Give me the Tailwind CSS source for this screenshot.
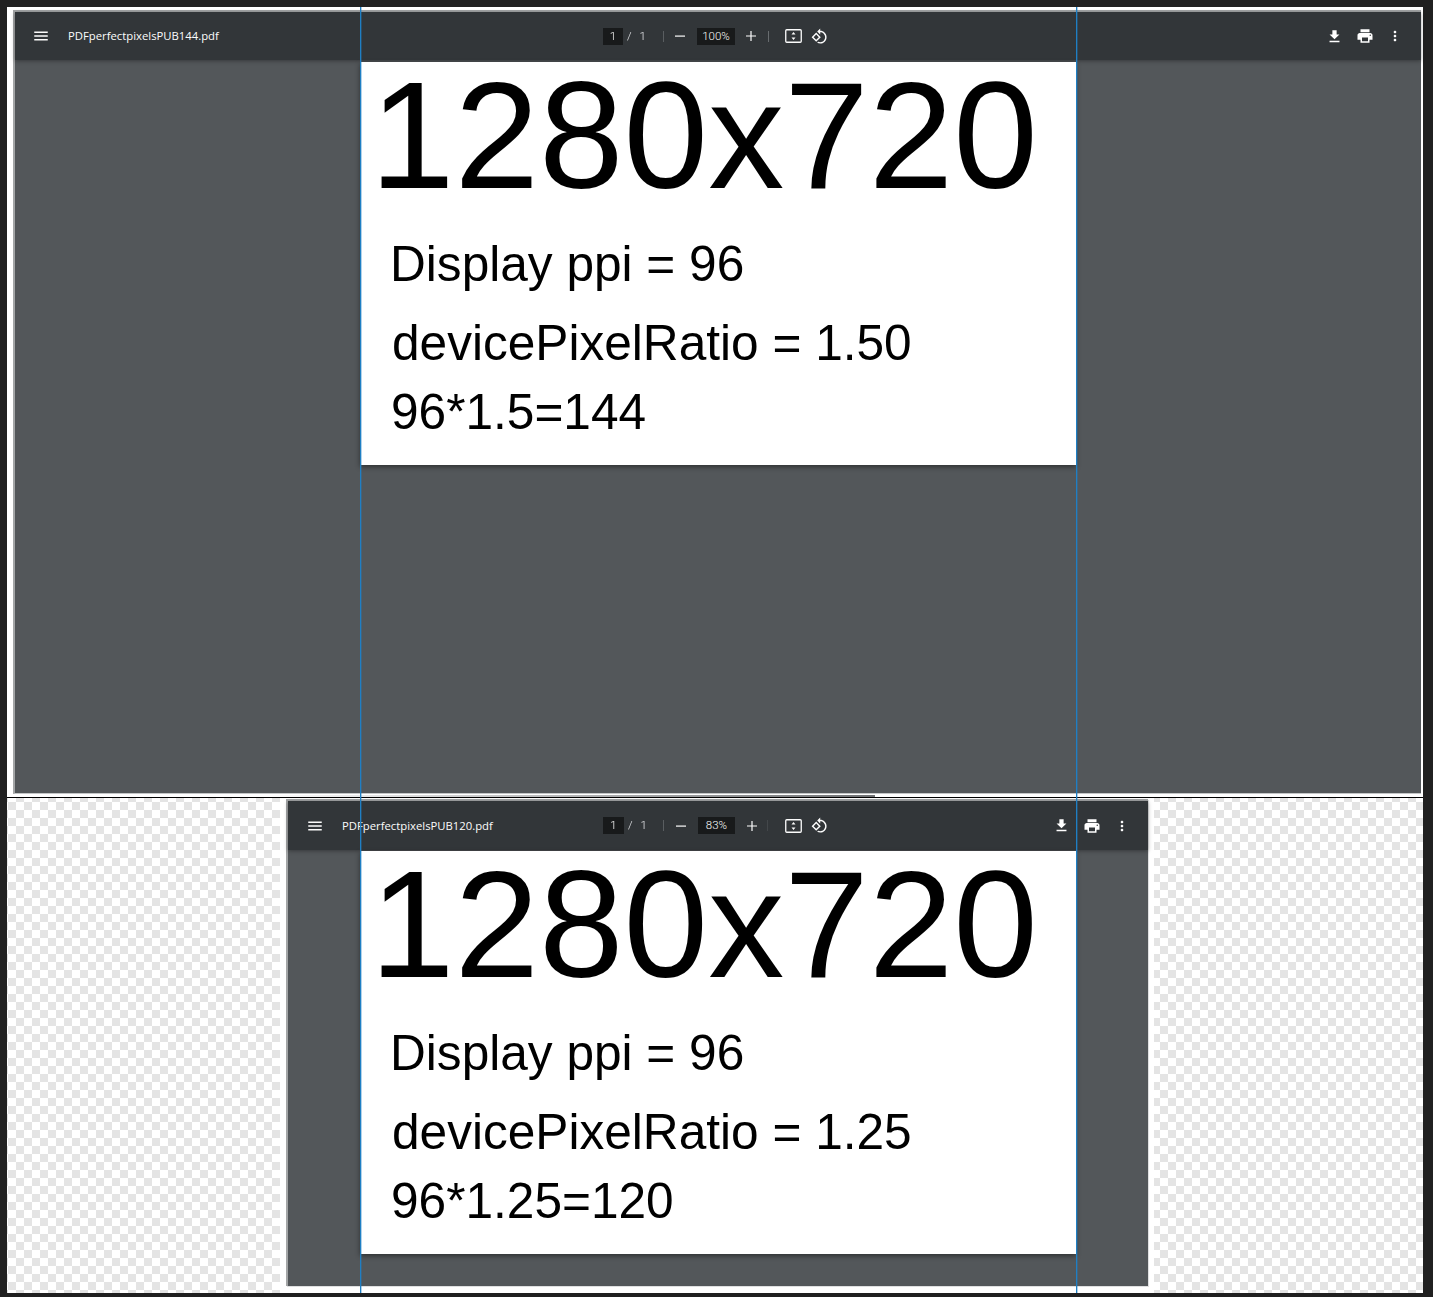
<!DOCTYPE html>
<html>
<head>
	<title>PDF perfect pixels</title>
	<script src="https://cdn.jsdelivr.net/npm/@tailwindcss/browser@4"></script>
</head>
<body class="relative h-[1297px] w-[1433px] overflow-hidden bg-[#202020] font-['Liberation_Sans',Arial,sans-serif]">
	<div class="mx-[7px] mt-[7px] h-[1286px] w-[1416px] bg-white">

		<!-- top window, scale 144 -->
		<section class="h-[790px] pt-[3px]">
			<div class="ml-[6px] mr-[2px] flex h-[784px] flex-col border-b border-l-2 border-t-2 border-b-[#c4c6c7] border-l-[#a3a5a6] border-t-[#a3a5a6] bg-[#53575a]">
				<header class="flex h-[48px] shrink-0 items-center bg-[#323639] pr-[18px] text-white shadow-[0_1px_4px_rgba(0,0,0,0.35)]">
					<div class="flex w-[588px] shrink-0 items-center pl-[17px] opacity-[0.99]">
						<svg class="h-[18px] w-[18px] fill-white" viewBox="0 0 24 24"><path d="M3 18h18v-2H3v2zm0-5h18v-2H3v2zm0-7v2h18V6H3z"/></svg>
						<span class="ml-[18px] pt-px font-['Open_Sans',sans-serif] text-[11.3px]">PDFperfectpixelsPUB144.pdf</span>
					</div>
					<div class="flex items-center font-['Roboto',sans-serif] text-[11.5px] font-light opacity-[0.99]">
						<span class="flex h-[17px] w-[20px] items-center justify-center bg-[#191b1c] pt-px">1</span>
						<span class="ml-[4px] pt-px text-[#e8eaed]">/</span>
						<span class="ml-[8px] pt-px text-[#e8eaed]">1</span>
						<span class="ml-[17px] h-[11px] w-px bg-[#5c6063]"></span>
						<svg class="ml-[10px] h-[12px] w-[12px] fill-white" viewBox="0 0 12 12"><rect x="1" y="5.5" width="10" height="1.2"/></svg>
						<span class="ml-[11px] flex h-[17px] w-[38px] items-center justify-center bg-[#191b1c] pt-px">100%</span>
						<svg class="ml-[10px] h-[12px] w-[12px] fill-white" viewBox="0 0 12 12"><path d="M1 5.4h4.4V1h1.2v4.4H11v1.2H6.6V11H5.4V6.6H1z"/></svg>
						<span class="ml-[11px] h-[11px] w-px bg-[#6a6e71]"></span>
						<svg class="ml-[16px] h-[14px] w-[17px]" viewBox="0 0 17 14"><rect x="0.75" y="0.75" width="15.5" height="12.5" rx="1" fill="none" stroke="#fff" stroke-width="1.3"/><path d="M8.5 3l2 2.5h-4zM8.5 11l-2-2.5h4z" fill="#fff"/></svg>
						<svg class="ml-[9px] h-[17px] w-[17px] fill-white" viewBox="0 0 24 24"><path d="M7.34 6.41L.86 12.9l6.49 6.48 6.49-6.48-6.5-6.49zM3.69 12.9l3.66-3.66L11 12.9l-3.66 3.66-3.65-3.66zm15.67-6.26C17.61 4.88 15.3 4 13 4V.76L8.76 5 13 9.24V6c1.79 0 3.58.68 4.95 2.05 2.73 2.73 2.73 7.17 0 9.9C16.58 19.32 14.79 20 13 20c-.97 0-1.94-.21-2.84-.61l-1.49 1.49C10.02 21.62 11.51 22 13 22c2.3 0 4.61-.88 6.36-2.64 3.52-3.51 3.52-9.21 0-12.72z"/></svg>
					</div>
					<div class="ml-auto flex items-center gap-[13px]">
						<svg class="h-[17px] w-[17px] fill-white" viewBox="0 0 24 24"><path d="M19 9h-4V3H9v6H5l7 7 7-7zM5 18v2h14v-2H5z"/></svg>
						<svg class="h-[18px] w-[18px] fill-white" viewBox="0 0 24 24"><path d="M19 8H5c-1.66 0-3 1.34-3 3v6h4v4h12v-4h4v-6c0-1.66-1.34-3-3-3zm-3 11H8v-5h8v5zm3-7c-.55 0-1-.45-1-1s.45-1 1-1 1 .45 1 1-.45 1-1 1zm-1-9H6v4h12V3z"/></svg>
						<svg class="h-[16px] w-[16px] fill-white" viewBox="0 0 24 24"><path d="M12 8c1.1 0 2-.9 2-2s-.9-2-2-2-2 .9-2 2 .9 2 2 2zm0 2c-1.1 0-2 .9-2 2s.9 2 2 2 2-.9 2-2-.9-2-2-2zm0 6c-1.1 0-2 .9-2 2s.9 2 2 2 2-.9 2-2-.9-2-2-2z"/></svg>
					</div>
				</header>
				<div class="pl-[345px] pt-[2px]">
					<article class="h-[403px] w-[716px] bg-white text-black shadow-[0_2px_5px_rgba(0,0,0,0.45)]">
						<p class="pl-[10px] pt-[3px] text-[152px] leading-[140px]">1280x720</p>
						<p class="pl-[30px] pt-[31px] text-[49.6px] leading-[56px]">Display ppi = 96</p>
						<p class="pl-[32px] pt-[23px] text-[49.6px] leading-[56px]">devicePixelRatio = 1.50</p>
						<p class="pl-[31px] pt-[13px] text-[49.6px] leading-[56px]">96*1.5=144</p>
					</article>
				</div>
			</div>
			<div class="mt-px h-[2px] w-[868px] bg-linear-to-r from-white from-30% to-[#6f7173]"></div>
		</section>

		<div class="h-px bg-black"></div>

		<!-- bottom window, scale 120, on a transparency grid -->
		<section class="flex h-[495px] items-start bg-[repeating-conic-gradient(#e4e4e4_0_25%,#ffffff_0_50%)] bg-[length:16px_16px] bg-[position:-7px_4px]">
			<div class="ml-[273px] h-[495px] w-[874px] bg-white pl-[6px] pt-px">
				<div class="flex h-[487px] w-[862px] flex-col border-l-2 border-t-2 border-[#a3a5a6] bg-[#53575a] shadow-[1px_1px_0_#dfe0e1]">
					<header class="flex h-[49px] shrink-0 items-center bg-[#323639] pr-[18px] text-white shadow-[0_1px_4px_rgba(0,0,0,0.35)]">
						<div class="flex w-[315px] shrink-0 items-center pl-[18px] opacity-[0.99]">
							<svg class="h-[18px] w-[18px] fill-white" viewBox="0 0 24 24"><path d="M3 18h18v-2H3v2zm0-5h18v-2H3v2zm0-7v2h18V6H3z"/></svg>
							<span class="ml-[18px] pt-px font-['Open_Sans',sans-serif] text-[11.3px]">PDFperfectpixelsPUB120.pdf</span>
						</div>
						<div class="flex items-center font-['Roboto',sans-serif] text-[11.5px] font-light opacity-[0.99]">
							<span class="flex h-[17px] w-[21px] items-center justify-center bg-[#191b1c] pt-px">1</span>
							<span class="ml-[4px] pt-px text-[#e8eaed]">/</span>
							<span class="ml-[8px] pt-px text-[#e8eaed]">1</span>
							<span class="ml-[16px] h-[11px] w-px bg-[#5c6063]"></span>
							<svg class="ml-[11px] h-[12px] w-[12px] fill-white" viewBox="0 0 12 12"><rect x="1" y="5.5" width="10" height="1.2"/></svg>
							<span class="ml-[11px] flex h-[17px] w-[37px] items-center justify-center bg-[#191b1c] pt-px">83%</span>
							<svg class="ml-[11px] h-[12px] w-[12px] fill-white" viewBox="0 0 12 12"><path d="M1 5.4h4.4V1h1.2v4.4H11v1.2H6.6V11H5.4V6.6H1z"/></svg>
							<span class="ml-[9px] h-[11px] w-px bg-[#44484b]"></span>
							<svg class="ml-[17px] h-[14px] w-[17px]" viewBox="0 0 17 14"><rect x="0.75" y="0.75" width="15.5" height="12.5" rx="1" fill="none" stroke="#fff" stroke-width="1.3"/><path d="M8.5 3l2 2.5h-4zM8.5 11l-2-2.5h4z" fill="#fff"/></svg>
							<svg class="ml-[9px] h-[17px] w-[17px] fill-white" viewBox="0 0 24 24"><path d="M7.34 6.41L.86 12.9l6.49 6.48 6.49-6.48-6.5-6.49zM3.69 12.9l3.66-3.66L11 12.9l-3.66 3.66-3.65-3.66zm15.67-6.26C17.61 4.88 15.3 4 13 4V.76L8.76 5 13 9.24V6c1.79 0 3.58.68 4.95 2.05 2.73 2.73 2.73 7.17 0 9.9C16.58 19.32 14.79 20 13 20c-.97 0-1.94-.21-2.84-.61l-1.49 1.49C10.02 21.62 11.51 22 13 22c2.3 0 4.61-.88 6.36-2.64 3.52-3.51 3.52-9.21 0-12.72z"/></svg>
						</div>
						<div class="ml-auto flex items-center gap-[13px]">
							<svg class="h-[17px] w-[17px] fill-white" viewBox="0 0 24 24"><path d="M19 9h-4V3H9v6H5l7 7 7-7zM5 18v2h14v-2H5z"/></svg>
							<svg class="h-[18px] w-[18px] fill-white" viewBox="0 0 24 24"><path d="M19 8H5c-1.66 0-3 1.34-3 3v6h4v4h12v-4h4v-6c0-1.66-1.34-3-3-3zm-3 11H8v-5h8v5zm3-7c-.55 0-1-.45-1-1s.45-1 1-1 1 .45 1 1-.45 1-1 1zm-1-9H6v4h12V3z"/></svg>
							<svg class="h-[16px] w-[16px] fill-white" viewBox="0 0 24 24"><path d="M12 8c1.1 0 2-.9 2-2s-.9-2-2-2-2 .9-2 2 .9 2 2 2zm0 2c-1.1 0-2 .9-2 2s.9 2 2 2 2-.9 2-2-.9-2-2-2zm0 6c-1.1 0-2 .9-2 2s.9 2 2 2 2-.9 2-2-.9-2-2-2z"/></svg>
						</div>
					</header>
					<div class="pl-[72px] pt-px">
						<article class="h-[403px] w-[716px] bg-white text-black shadow-[0_2px_5px_rgba(0,0,0,0.45)]">
							<p class="pl-[10px] pt-[3px] text-[152px] leading-[140px]">1280x720</p>
							<p class="pl-[30px] pt-[31px] text-[49.6px] leading-[56px]">Display ppi = 96</p>
							<p class="pl-[32px] pt-[23px] text-[49.6px] leading-[56px]">devicePixelRatio = 1.25</p>
							<p class="pl-[31px] pt-[13px] text-[49.6px] leading-[56px]">96*1.25=120</p>
						</article>
					</div>
				</div>
			</div>
		</section>
	</div>

	<!-- ruler lines drawn over both windows -->
	<div class="absolute left-[360px] top-[7px] h-[1286px] w-px bg-[#1f7fc4] shadow-[1px_0_0_rgba(31,127,196,0.35)]"></div>
	<div class="absolute left-[1076px] top-[7px] h-[1286px] w-px bg-[#1f7fc4] shadow-[1px_0_0_rgba(31,127,196,0.35)]"></div>
</body>
</html>
